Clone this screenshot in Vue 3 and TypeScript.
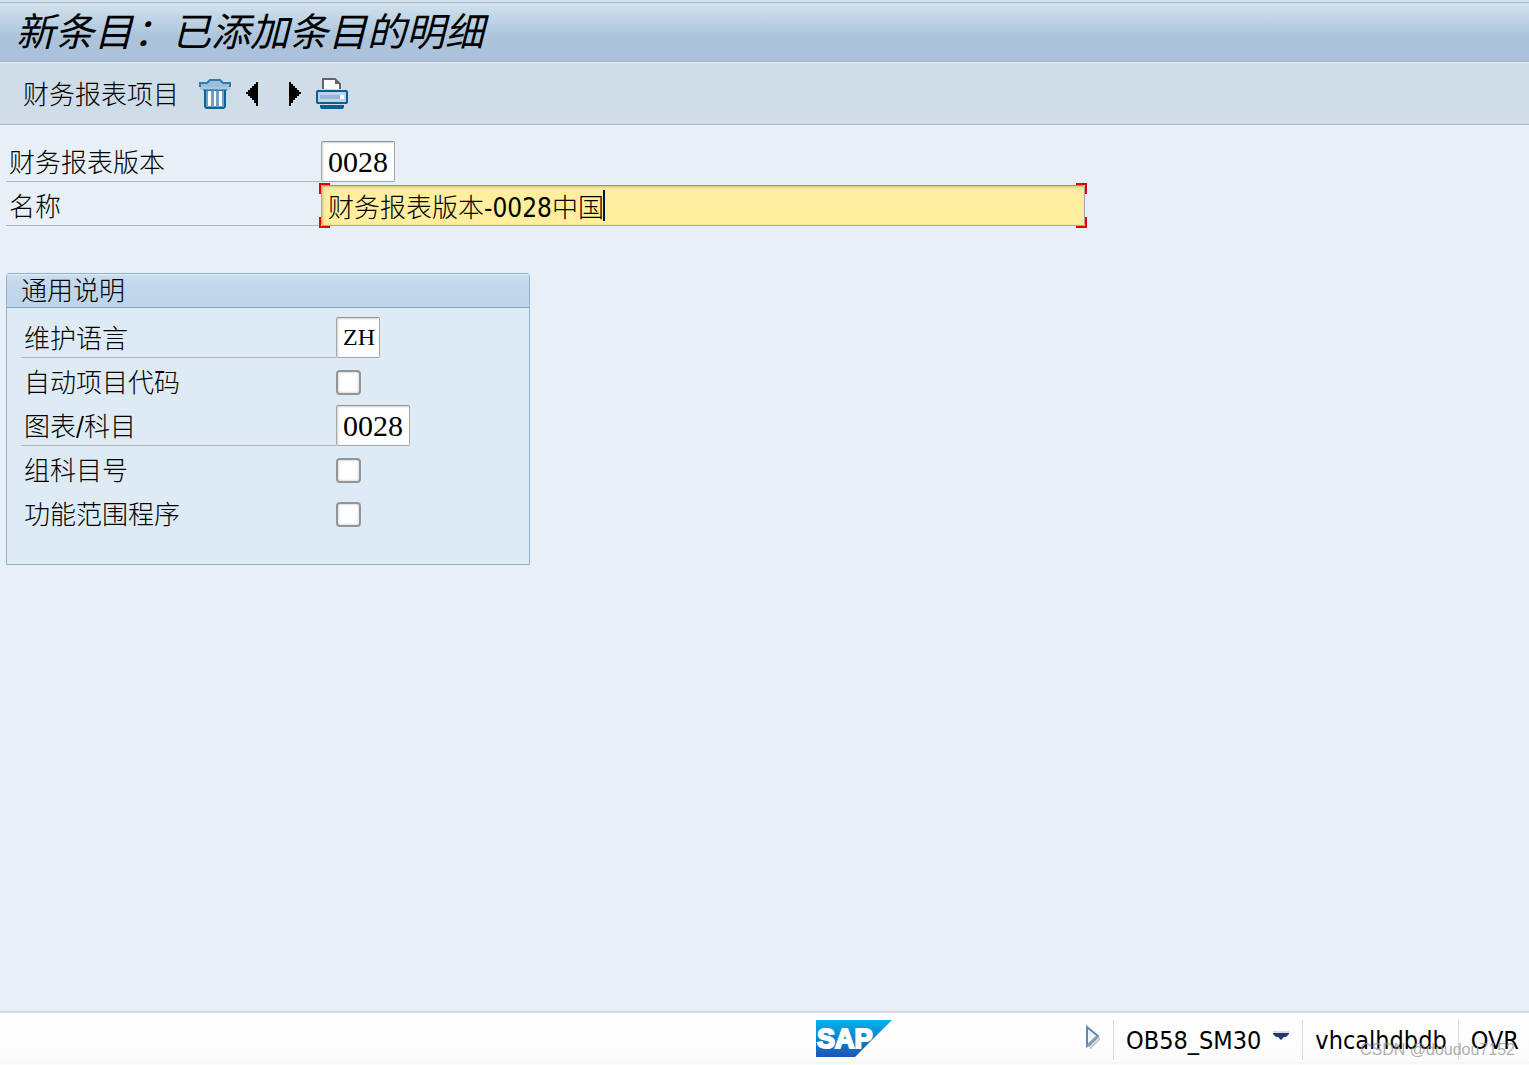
<script setup lang="ts">
import { reactive } from 'vue'

interface Detail {
  id: string
  label: string
  kind: 'text' | 'check'
  size?: string
}

const details: Detail[] = [
  { id: 'language', label: '维护语言', kind: 'text', size: 'two' },
  { id: 'autoCode', label: '自动项目代码', kind: 'check' },
  { id: 'chart', label: '图表/科目', kind: 'text', size: 'four' },
  { id: 'groupAccount', label: '组科目号', kind: 'check' },
  { id: 'functionalArea', label: '功能范围程序', kind: 'check' },
]

const form = reactive({
  version: '0028',
  name: '财务报表版本-0028中国',
})
const texts = reactive<Record<string, string>>({ language: 'ZH', chart: '0028' })
const checks = reactive<Record<string, boolean>>({
  autoCode: false,
  groupAccount: false,
  functionalArea: false,
})
</script>

<template>
  <div class="window">
    <header class="titlebar">
      <h1>新条目：已添加条目的明细</h1>
    </header>

    <nav class="toolbar">
      <button type="button" class="text-button">财务报表项目</button>
      <button type="button" class="icon-button trash" aria-label="删除">
        <svg width="32" height="32" viewBox="0 0 32 32">
          <path d="M5 11h22v18l-2 2H7l-2-2z" fill="#0a6496" />
          <path d="M7 12h18v17H7z" fill="#6f9fc6" />
          <path d="M9 13h3v15H9zM15 13h2v15h-2zM20 13h3v15h-3z" fill="#fff" />
          <path d="M1 4h7l3-3h9l3 3h8v7H1z" fill="#9dbddc" />
          <path d="M1 9V5h7l3-3h10l3 3h7v4" fill="none" stroke="#2f7dab" stroke-width="2" />
          <path d="M1 9h30v3H1z" fill="#a9c9e0" />
          <path d="M4 12h24" stroke="#0a6496" stroke-width="1" />
        </svg>
      </button>
      <button type="button" class="icon-button previous" aria-label="上一条目">
        <svg width="12" height="24" viewBox="0 0 12 24">
          <path d="M12 0v24h-2v-3H8v-3H6v-2H4v-2H2v-2H0v-2h2V8h2V6h2V4h2V2h2V0z" />
        </svg>
      </button>
      <button type="button" class="icon-button next" aria-label="下一条目">
        <svg width="12" height="24" viewBox="0 0 12 24">
          <path d="M0 0v24h2v-3h2v-3h2v-2h2v-2h2v-2h2v-2h-2V8H8V6H6V4H4V2H2V0z" />
        </svg>
      </button>
      <button type="button" class="icon-button print" aria-label="打印">
        <svg width="32" height="32" viewBox="0 0 32 32">
          <path d="M7 11V1h12l5 5v5z" fill="#fff" />
          <path d="M7 11V1h12l5 5v5" fill="none" stroke="#626466" stroke-width="2" />
          <path d="M19 1v5h5z" fill="#626466" />
          <rect x="1" y="13" width="30" height="12" rx="1" fill="#bfd3e8" stroke="#075f93" stroke-width="2" />
          <path d="M4 17h20v4H4z" fill="#94b6da" />
          <path d="M24 17h4v4h-4z" fill="#fff" />
          <path d="M4 27h24v2l-1 2H5l-1-2z" fill="#075f93" />
        </svg>
      </button>
    </nav>

    <main class="content">
      <div class="row underlined">
        <label for="version">财务报表版本</label>
        <input id="version" v-model="form.version" class="field four" type="text" />
      </div>
      <div class="row underlined">
        <label for="name">名称</label>
        <div class="focused">
          <input id="name" v-model="form.name" class="field name" type="text" />
          <span class="caret"></span>
          <i class="corner top left"></i>
          <i class="corner top right"></i>
          <i class="corner bottom left"></i>
          <i class="corner bottom right"></i>
        </div>
      </div>

      <section class="group">
        <h2>通用说明</h2>
        <div class="group-body">
          <div v-for="item in details" :key="item.id" class="row" :class="{ underlined: item.kind === 'text' }">
            <label :for="item.id">{{ item.label }}</label>
            <input
              v-if="item.kind === 'text'"
              :id="item.id"
              v-model="texts[item.id]"
              class="field"
              :class="item.size"
              type="text"
            />
            <input v-else :id="item.id" v-model="checks[item.id]" class="check" type="checkbox" />
          </div>
        </div>
      </section>
    </main>

    <footer class="status">
      <svg class="logo" width="76" height="37" viewBox="0 0 76 37" role="img" aria-label="SAP">
        <defs>
          <linearGradient id="sap" x1="0" y1="0" x2="0" y2="1">
            <stop offset="0" stop-color="#05b2ea" />
            <stop offset="0.5" stop-color="#0b82d0" />
            <stop offset="1" stop-color="#1e55b4" />
          </linearGradient>
        </defs>
        <path d="M0 0h76L39 37H0z" fill="url(#sap)" />
        <text x="1" y="28" class="logo-text">SAP</text>
      </svg>
      <div class="status-items">
        <button type="button" class="icon-button expand" aria-label="展开">
          <svg width="16" height="24" viewBox="0 0 16 24">
            <path d="M4 23l11-11v3L6 24z" fill="#c3ccd4" />
            <path d="M2 2v19L13 11z" fill="#eef4fa" stroke="#6089b3" stroke-width="2" />
            <path d="M3 21L13 11" stroke="#8b98a5" stroke-width="3" />
          </svg>
        </button>
        <button type="button" class="cell transaction">
          OB58_SM30
          <svg width="16" height="10" viewBox="0 0 16 10">
            <path d="M0 0h16v2H0z" fill="#d9dde2" />
            <path d="M0 2h16v1l-3 3h-2L8 9 5 6H3L0 3z" fill="#25386c" />
          </svg>
        </button>
        <span class="cell host">vhcalhdbdb</span>
        <span class="cell mode">OVR</span>
      </div>
      <span class="watermark">CSDN @doudou7152</span>
    </footer>
  </div>
</template>

<style>
body {
  margin: 0;
}
</style>

<style scoped>
.window {
  display: flex;
  flex-direction: column;
  box-sizing: border-box;
  min-height: 100vh;
  border-top: 2px solid #d5dfea;
  background: #e8eff7;
  color: #000;
  font-family: "DejaVu Sans Condensed", "Noto Sans CJK SC", sans-serif;
  font-size: 26px;
  font-weight: 300;
  line-height: 32px;
}

button {
  padding: 0;
  border: 0;
  background: none;
  color: inherit;
  font: inherit;
}

svg {
  display: block;
}

.titlebar {
  display: flex;
  align-items: center;
  box-sizing: border-box;
  height: 60px;
  padding: 0 16px 6px;
  border-top: 1px solid #a2b6cc;
  border-bottom: 1px solid #a0b2c8;
  background: linear-gradient(#d3e2ee, #b0c9de 50%, #abc3da 60%, #abc2db);
}

h1 {
  margin: 0;
  font-family: "Noto Sans CJK SC", sans-serif;
  font-size: 39px;
  font-style: italic;
  font-weight: 400;
  line-height: 52px;
}

.toolbar {
  display: flex;
  align-items: center;
  box-sizing: border-box;
  height: 63px;
  padding-left: 23px;
  border-top: 1px solid #e6eef5;
  border-bottom: 1px solid #a7b9cb;
  background: #cfdde8;
}

.text-button {
  padding-top: 2px;
}

.trash {
  margin-left: 20px;
}

.previous {
  margin-left: 15px;
}

.next {
  margin-left: 31px;
}

.print {
  margin-left: 15px;
}

.content {
  flex: 1;
  padding: 13px 6px;
}

.row {
  display: flex;
  align-items: flex-end;
  height: 44px;
}

.row label {
  box-sizing: border-box;
  width: 315px;
  height: 44px;
  padding: 9px 0 0 3px;
  border-bottom: 1px solid transparent;
}

.row.underlined label {
  border-bottom-color: #b1b8be;
}

.field {
  display: block;
  box-sizing: border-box;
  height: 41px;
  padding: 0 0 0 6px;
  border: 1px solid #a5a8ab;
  border-top-color: #8f9396;
  border-radius: 2px;
  background: #fff;
  box-shadow: inset 1px 1px 2px #d0d0d0;
  color: #000;
  font-family: "Liberation Serif", serif;
  font-size: 30px;
  outline: 0;
}

.four {
  width: 74px;
}

.two {
  width: 44px;
  font-size: 24px;
}

.focused {
  position: relative;
  flex: 0 1 764px;
  min-width: 0;
}

.name {
  width: 100%;
  background: #ffee9d;
  box-shadow: inset 1px 1px 3px #cdbf79;
  font-family: "DejaVu Sans Condensed", "Noto Sans CJK SC", sans-serif;
  font-size: 26px;
  font-weight: 300;
}

.caret {
  position: absolute;
  top: 5px;
  left: 282px;
  width: 2px;
  height: 31px;
  background: #00104a;
}

.corner {
  position: absolute;
  width: 9px;
  height: 9px;
  border: 0 solid #e60000;
}

.top {
  top: -2px;
  border-top-width: 2px;
}

.bottom {
  bottom: -2px;
  border-bottom-width: 2px;
}

.left {
  left: -2px;
  border-left-width: 2px;
}

.right {
  right: -2px;
  border-right-width: 2px;
}

.group {
  box-sizing: border-box;
  width: 524px;
  max-width: 100%;
  margin-top: 47px;
  border: 1px solid #8fb0cf;
  border-radius: 3px 3px 0 0;
  background: #deebf4;
}

h2 {
  margin: 0;
  padding-left: 14px;
  border-top: 1px solid #e2eef7;
  border-bottom: 1px solid #86a6cb;
  background: linear-gradient(#cbdeed, #c0d6ea 40%, #bfd6ea);
  font-size: 26px;
  font-weight: 300;
  line-height: 32px;
}

.group-body {
  padding: 6px 14px 30px;
}

.check {
  appearance: none;
  box-sizing: border-box;
  width: 25px;
  height: 25px;
  margin: 0 0 7px;
  border: 2px solid #939698;
  border-radius: 4px;
  background: #fff;
  box-shadow: inset 0 0 2px 1px #dedee0;
}

.check:checked {
  background: #6089b3;
}

.status {
  position: relative;
  display: flex;
  justify-content: space-between;
  box-sizing: border-box;
  height: 54px;
  padding: 7px 10px 0 816px;
  border-top: 2px solid #d2d9e2;
  background: linear-gradient(#fff, #fbfbfb 48px, #f3f3f3 50px, #fcfcfc 51px);
  font-size: 25px;
}

.logo-text {
  fill: #fff;
  stroke: #fff;
  stroke-width: 2px;
  font-family: "Liberation Sans", sans-serif;
  font-size: 27px;
  font-weight: 700;
}

.status-items {
  display: flex;
  height: 40px;
}

.expand {
  align-self: flex-start;
  margin: 5px 12px 0 0;
}

.cell {
  display: flex;
  align-items: center;
  box-sizing: border-box;
  height: 40px;
  padding: 2px 0 0 12px;
  border-left: 1px solid #dcdcdc;
  white-space: nowrap;
}

.transaction {
  gap: 12px;
  margin-right: 13px;
}

.transaction svg {
  margin-bottom: 10px;
}

.host {
  margin-right: 11px;
}

.watermark {
  position: absolute;
  right: 14px;
  bottom: 5px;
  color: #9a9a9acc;
  font-family: "Liberation Sans", sans-serif;
  font-size: 16px;
  line-height: 20px;
}
</style>
